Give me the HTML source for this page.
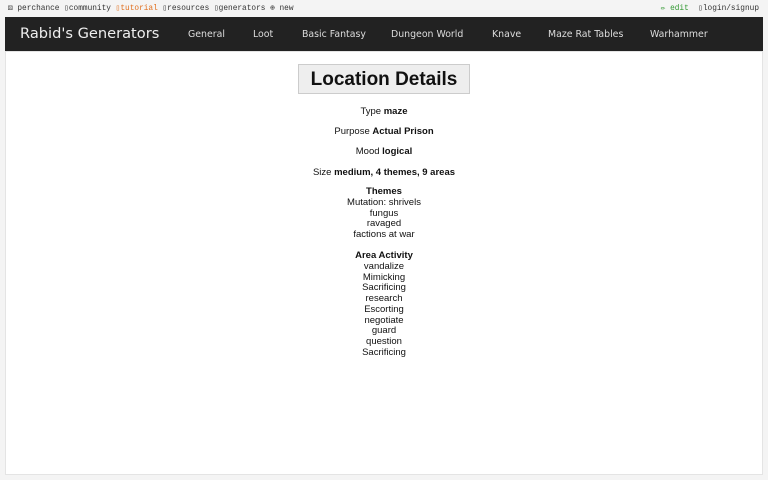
<!DOCTYPE html>
<html><head><style>
body{margin:0;background:#f4f4f4;width:768px;height:480px;overflow:hidden;font-family:"Liberation Sans",sans-serif;position:relative}
.top{position:absolute;top:3px;left:8px;font-family:"Liberation Mono",monospace;font-size:7.8px;color:#333;white-space:pre}
.topr{position:absolute;top:3px;right:9px;font-family:"Liberation Mono",monospace;font-size:7.8px;color:#333;white-space:pre}
.nav{position:absolute;left:5px;top:17px;width:758px;height:34px;background:#222}
.nav span{position:absolute;top:12px;color:#ddd;font-family:"DejaVu Sans",sans-serif;font-size:9.4px}
.brand{position:absolute;left:15px;top:8px;color:#eee;font-family:"DejaVu Sans",sans-serif;font-size:14.6px}
.main{position:absolute;left:5px;top:51px;width:758px;height:424px;background:#fff;border:1px solid #e4e4e4;box-sizing:border-box}
.btn{position:absolute;left:298px;top:64px;width:170px;height:28px;background:#eee;border:1px solid #ccc;font-size:19px;font-weight:bold;text-align:center;line-height:29px;color:#111}
.c{position:absolute;left:0;width:768px;text-align:center;font-size:9.5px;color:#111}
.l{line-height:10.75px}
</style></head><body>
<div class="top">⚄ perchance ▯community <span style="color:#e07020">▯tutorial</span> ▯resources ▯generators ⊕ new</div>
<div class="topr"><span style="color:#393">✏ edit</span>  ▯login/signup</div>
<div class="nav">
<div class="brand">Rabid's Generators</div>
<span style="left:183px">General</span>
<span style="left:248px">Loot</span>
<span style="left:297px">Basic Fantasy</span>
<span style="left:386px">Dungeon World</span>
<span style="left:487px">Knave</span>
<span style="left:543px">Maze Rat Tables</span>
<span style="left:645px">Warhammer</span>
</div>
<div class="main"></div>
<div class="btn">Location Details</div>
<div class="c" style="top:106px">Type <b>maze</b></div>
<div class="c" style="top:126px">Purpose <b>Actual Prison</b></div>
<div class="c" style="top:146px">Mood <b>logical</b></div>
<div class="c" style="top:167px">Size <b>medium, 4 themes, 9 areas</b></div>
<div class="c l" style="top:187px"><b>Themes</b><br>Mutation: shrivels<br>fungus<br>ravaged<br>factions at war</div>
<div class="c l" style="top:251px"><b>Area Activity</b><br>vandalize<br>Mimicking<br>Sacrificing<br>research<br>Escorting<br>negotiate<br>guard<br>question<br>Sacrificing</div>
</body></html>
